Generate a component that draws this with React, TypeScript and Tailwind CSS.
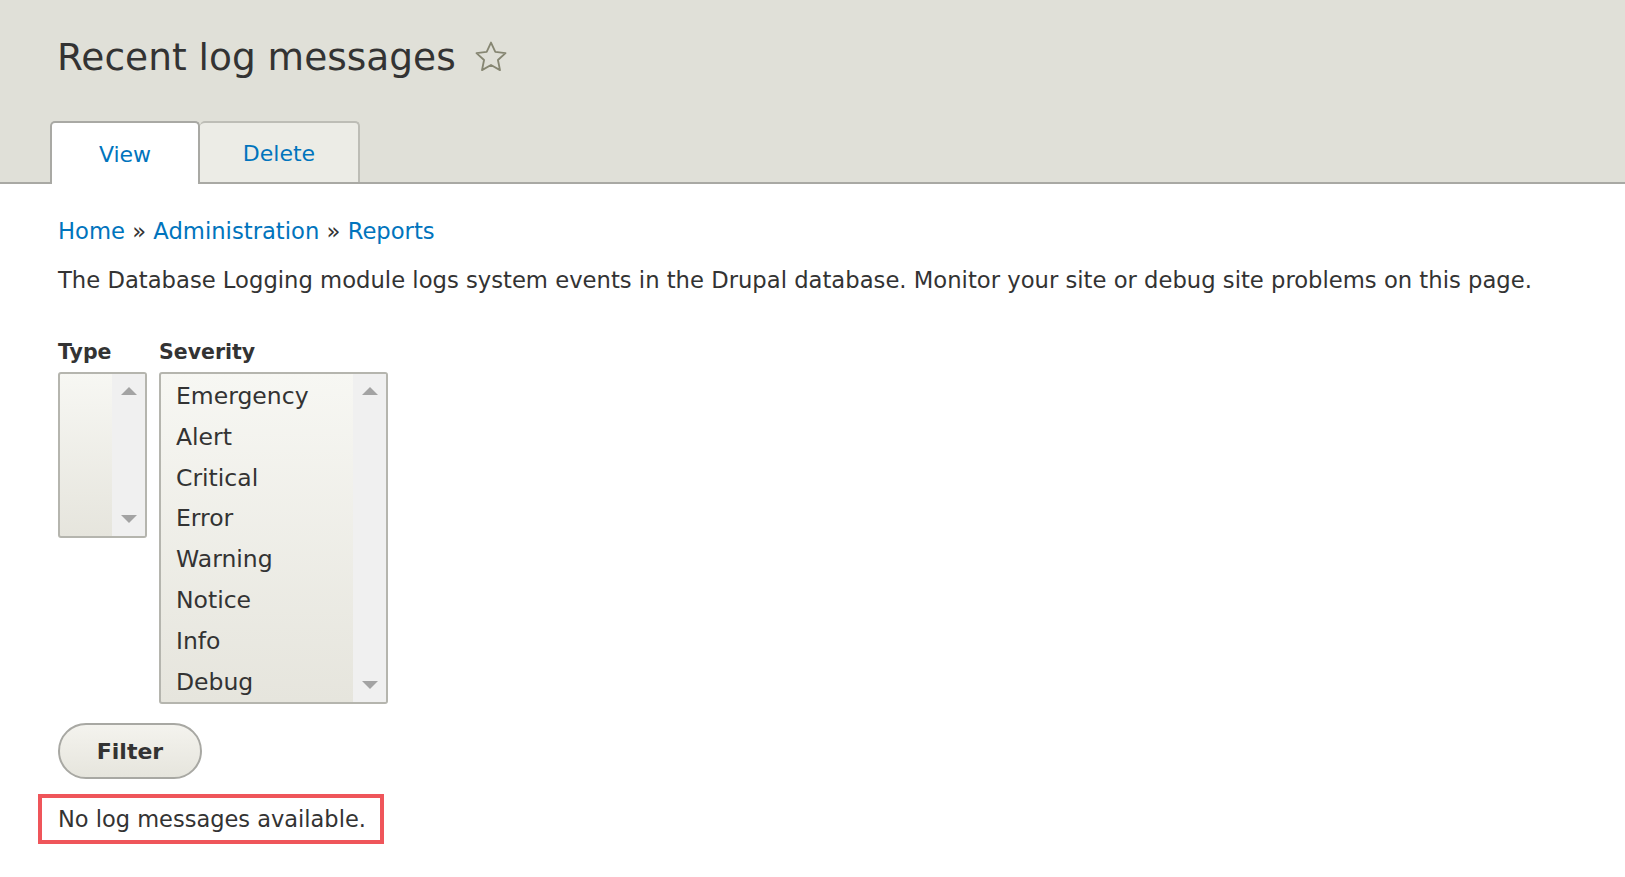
const font = { fontFamily: '"DejaVu Sans", "Liberation Sans", sans-serif' }

const severities = ["Emergency", "Alert", "Critical", "Error", "Warning", "Notice", "Info", "Debug"]

function Scrollbar() {
  return (
    <div className="flex w-[33px] shrink-0 flex-col items-center justify-between bg-[#f0f0f0] py-[13px]">
      <div className="h-0 w-0 border-x-[8px] border-b-[8px] border-x-transparent border-b-[#a3a3a3]" />
      <div className="h-0 w-0 border-x-[8px] border-t-[8px] border-x-transparent border-t-[#a3a3a3]" />
    </div>
  )
}

function StarIcon() {
  return (
    <svg width="34" height="34" viewBox="0 0 24 24" fill="none" stroke="#868672" strokeWidth="1.3" strokeLinejoin="round">
      <path d="M12 1.8l3.05 6.6 7.2.85-5.35 4.9 1.45 7.1L12 17.65 5.65 21.25l1.45-7.1L1.75 9.25l7.2-.85z" />
    </svg>
  )
}

export default function App() {
  return (
    <div className="min-h-screen bg-white text-[#333]" style={font}>
      <header className="border-b-2 border-[#a9a9a4] bg-[#e0e0d8]">
        <div className="flex items-center gap-[18px] pl-[57px] pt-[33px]">
          <h1 className="text-[37.5px] leading-[48px] font-normal text-[#333]">Recent log messages</h1>
          <StarIcon />
        </div>
        <nav className="mt-[40px] flex pl-[50px]">
          <a className="-mb-[2px] flex h-[63px] w-[150px] items-center justify-center rounded-t-[5px] border-x-2 border-t-2 border-[#a9a9a4] bg-white pt-[2px] text-[22px] text-[#0074bd]">
            View
          </a>
          <a className="flex h-[61px] w-[160px] items-center justify-center rounded-t-[5px] border-r-2 border-t-2 border-[#bdbdb6] bg-[#ecece6] pt-[2px] text-[22px] text-[#0074bd]">
            Delete
          </a>
        </nav>
      </header>

      <main className="pl-[58px]">
        <div className="mt-[31px] text-[22.7px] leading-[32px]">
          <a className="text-[#0074bd]">Home</a>
          <span> » </span>
          <a className="text-[#0074bd]">Administration</a>
          <span> » </span>
          <a className="text-[#0074bd]">Reports</a>
        </div>
        <p className="mt-[17px] text-[22.7px] leading-[32px]">
          The Database Logging module logs system events in the Drupal database. Monitor your site or debug site problems on this page.
        </p>

        <div className="mt-[40px] flex gap-[12px]">
          <div className="flex flex-col">
            <label className="text-[20.5px] font-bold leading-[32px]">Type</label>
            <div className="mt-[4px] flex h-[166px] w-[89px] overflow-hidden rounded-[3px] border-2 border-[#b5b5ae] bg-gradient-to-b from-[#f7f7f3] to-[#e6e5dd]">
              <div className="flex-1" />
              <Scrollbar />
            </div>
          </div>
          <div className="flex flex-col">
            <label className="text-[20.5px] font-bold leading-[32px]">Severity</label>
            <div className="mt-[4px] flex h-[332px] w-[229px] overflow-hidden rounded-[3px] border-2 border-[#b5b5ae] bg-gradient-to-b from-[#f7f7f3] to-[#e6e5dd]">
              <ul className="flex-1 pl-[15px] pt-[2px]">
                {severities.map((s) => (
                  <li key={s} className="text-[23.5px] leading-[40.8px]">
                    {s}
                  </li>
                ))}
              </ul>
              <Scrollbar />
            </div>
          </div>
        </div>

        <button className="mt-[19px] h-[56px] w-[144px] rounded-full border-2 border-[#a8a8a3] bg-gradient-to-b from-[#f4f3ee] to-[#e6e5dd] text-[22px] font-bold text-[#333]">
          Filter
        </button>
      </main>

      <div className="ml-[38px] mt-[15px] w-[346px] border-[4px] border-[#ef555a] py-[6px] pl-[16px] text-[22.5px] leading-[30px]">
        No log messages available.
      </div>
    </div>
  )
}
